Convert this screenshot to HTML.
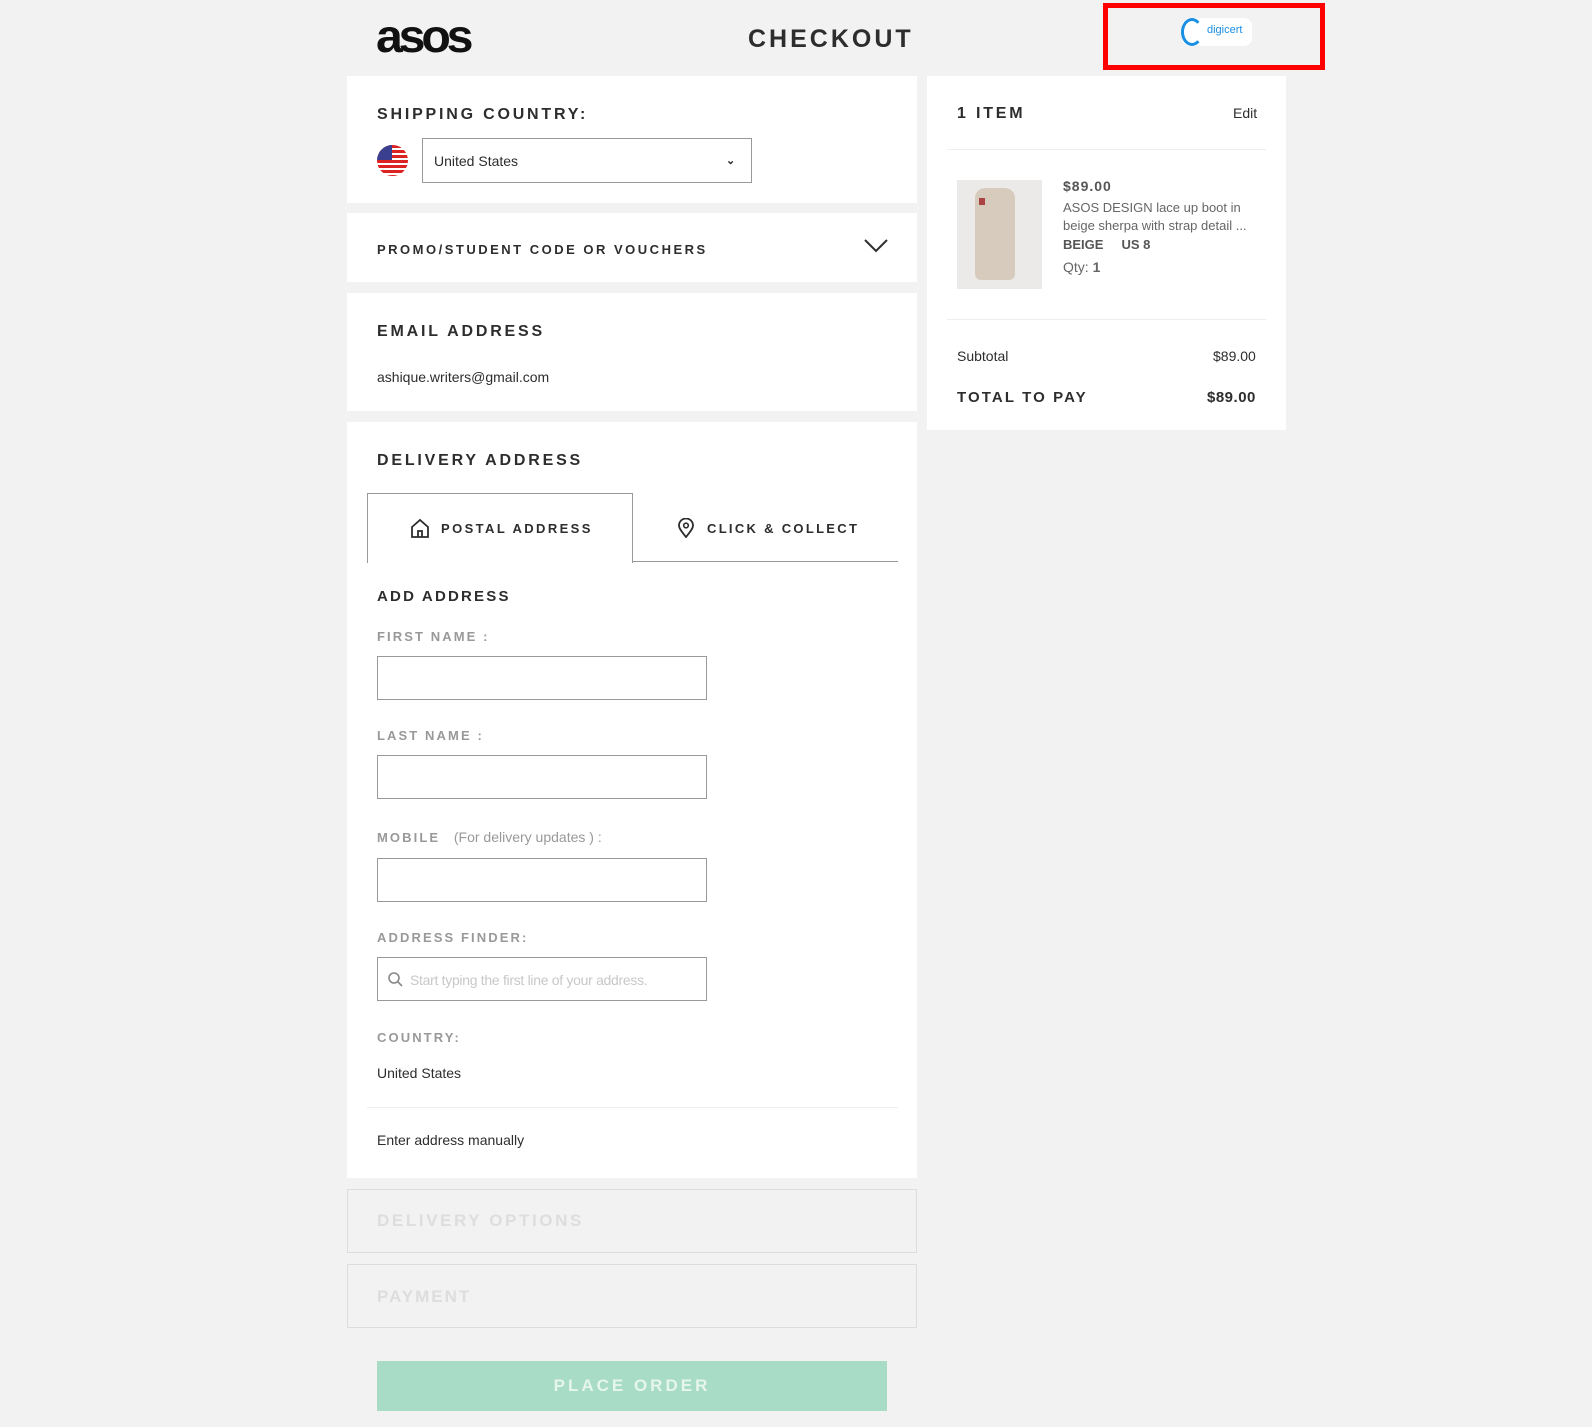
<!DOCTYPE html>
<html><head><meta charset="utf-8"><style>
*{margin:0;padding:0;box-sizing:border-box}
body{width:1592px;height:1427px;background:#f2f2f2;font-family:"Liberation Sans",sans-serif;color:#2d2d2d;position:relative;overflow:hidden}
.a{position:absolute}
.card{position:absolute;background:#fff}
.h{position:absolute;font-weight:bold;font-size:16px;letter-spacing:2.8px;line-height:20px;color:#2d2d2d;white-space:nowrap}
.t{position:absolute;font-size:14px;line-height:18px;white-space:nowrap;color:#2d2d2d}
.lab{position:absolute;font-weight:bold;font-size:13px;letter-spacing:2.1px;color:#999;line-height:16px;white-space:nowrap}
.inp{position:absolute;left:377px;width:330px;height:44px;border:1px solid #999;background:#fff}
</style></head><body>
<div class="a" style="left:376px;top:12px;font-weight:bold;font-size:46px;letter-spacing:-4px;line-height:48px;color:#111;transform:scaleX(1.05);transform-origin:left">asos</div>
<div class="a" style="left:748px;top:24px;font-weight:bold;font-size:25px;letter-spacing:3px;line-height:30px;color:#2d2d2d">CHECKOUT</div>
<div class="a" style="left:1103px;top:3px;width:222px;height:67px;border:5px solid #f00"></div>
<div class="a" style="left:1182px;top:18px;width:70px;height:28px;background:#fff;border-radius:8px"></div>
<div class="a" style="left:1181px;top:18px;width:22px;height:28px;border:3px solid #1a8fe3;border-right-color:transparent;border-radius:50%"></div>
<div class="a" style="left:1207px;top:24px;font-size:11px;color:#1a8fe3">digicert</div>

<div class="card" style="left:347px;top:76px;width:570px;height:127px"></div>
<div class="h" style="left:377px;top:105px">SHIPPING COUNTRY:</div>
<div class="a" style="left:377px;top:145px;width:31px;height:31px;border-radius:50%;overflow:hidden;background:repeating-linear-gradient(#d22 0 3px,#fff 3px 5px)"><div style="width:15px;height:15px;background:#3a3f8f"></div></div>
<div class="a" style="left:422px;top:138px;width:330px;height:45px;border:1px solid #999"></div>
<div class="t" style="left:434px;top:152px">United States</div>
<div class="t" style="left:726px;top:152px;font-size:11px;font-weight:bold">&#8964;</div>

<div class="card" style="left:347px;top:213px;width:570px;height:69px"></div>
<div class="h" style="left:377px;top:240px;font-size:13px;letter-spacing:2.5px">PROMO/STUDENT CODE OR VOUCHERS</div>
<svg class="a" style="left:864px;top:239px" width="24" height="14"><path d="M1 1L12 12L23 1" stroke="#2d2d2d" stroke-width="2" fill="none"/></svg>

<div class="card" style="left:347px;top:293px;width:570px;height:118px"></div>
<div class="h" style="left:377px;top:322px">EMAIL ADDRESS</div>
<div class="t" style="left:377px;top:368px">ashique.writers@gmail.com</div>

<div class="card" style="left:347px;top:422px;width:570px;height:756px"></div>
<div class="h" style="left:377px;top:451px">DELIVERY ADDRESS</div>
<div class="a" style="left:367px;top:493px;width:266px;height:70px;border:1px solid #999;border-bottom:none"></div>
<div class="a" style="left:633px;top:561px;width:265px;height:1px;background:#999"></div>
<svg class="a" style="left:410px;top:518px" width="20" height="20"><path d="M2 9L10 2L18 9V19H2Z M8 19V13H12V19" stroke="#2d2d2d" stroke-width="1.8" fill="none"/></svg>
<div class="h" style="left:441px;top:519px;font-size:13px;letter-spacing:2.4px">POSTAL ADDRESS</div>
<svg class="a" style="left:677px;top:518px" width="18" height="20"><path d="M9 19C4 13 2 10 2 7.5A7 7 0 0 1 16 7.5C16 10 14 13 9 19Z" stroke="#2d2d2d" stroke-width="1.8" fill="none"/><circle cx="9" cy="7.5" r="2.3" stroke="#2d2d2d" stroke-width="1.6" fill="none"/></svg>
<div class="h" style="left:707px;top:519px;font-size:13px;letter-spacing:2.3px">CLICK &amp; COLLECT</div>
<div class="h" style="left:377px;top:587px;font-size:15px;letter-spacing:2.2px">ADD ADDRESS</div>
<div class="lab" style="left:377px;top:629px">FIRST NAME :</div>
<div class="inp" style="top:656px"></div>
<div class="lab" style="left:377px;top:728px">LAST NAME :</div>
<div class="inp" style="top:755px"></div>
<div class="lab" style="left:377px;top:829px">MOBILE <span style="font-weight:normal;letter-spacing:0;font-size:14px;margin-left:8px">(For delivery updates ) :</span></div>
<div class="inp" style="top:858px"></div>
<div class="lab" style="left:377px;top:930px">ADDRESS FINDER:</div>
<div class="inp" style="top:957px"></div>
<svg class="a" style="left:388px;top:972px" width="15" height="15"><circle cx="6" cy="6" r="5" stroke="#888" stroke-width="1.6" fill="none"/><path d="M10 10L14 14" stroke="#888" stroke-width="1.6"/></svg>
<div class="t" style="left:410px;top:971px;color:#c8c8c8;letter-spacing:-0.3px">Start typing the first line of your address.</div>
<div class="lab" style="left:377px;top:1030px">COUNTRY:</div>
<div class="t" style="left:377px;top:1064px">United States</div>
<div class="a" style="left:367px;top:1107px;width:531px;height:1px;background:#eee"></div>
<div class="t" style="left:377px;top:1131px">Enter address manually</div>

<div class="a" style="left:347px;top:1189px;width:570px;height:64px;border:1px solid #ddd"></div>
<div class="h" style="left:377px;top:1211px;color:#ddd;font-size:17px;letter-spacing:2.6px">DELIVERY OPTIONS</div>
<div class="a" style="left:347px;top:1264px;width:570px;height:64px;border:1px solid #ddd"></div>
<div class="h" style="left:377px;top:1287px;color:#ddd;font-size:17px;letter-spacing:2px">PAYMENT</div>
<div class="a" style="left:377px;top:1361px;width:510px;height:50px;background:#a8dcc6;color:#e6f5ee;font-weight:bold;font-size:17px;letter-spacing:3px;text-align:center;line-height:50px">PLACE ORDER</div>

<div class="card" style="left:927px;top:76px;width:359px;height:354px"></div>
<div class="h" style="left:957px;top:104px">1 ITEM</div>
<div class="t" style="left:1233px;top:104px">Edit</div>
<div class="a" style="left:947px;top:149px;width:319px;height:1px;background:#eee"></div>
<div class="a" style="left:957px;top:180px;width:85px;height:109px;background:#eceae8"><div style="position:absolute;left:18px;top:8px;width:40px;height:92px;background:#d6cbbd;border-radius:10px 10px 6px 6px"></div><div style="position:absolute;left:22px;top:18px;width:6px;height:7px;background:#a44"></div></div>
<div class="t" style="left:1063px;top:177px;font-weight:bold;letter-spacing:1px;color:#555">$89.00</div>
<div class="t" style="left:1063px;top:199px;font-size:13px;color:#666">ASOS DESIGN lace up boot in</div>
<div class="t" style="left:1063px;top:217px;font-size:13px;color:#666">beige sherpa with strap detail ...</div>
<div class="t" style="left:1063px;top:236px;font-weight:bold;font-size:13px;color:#555">BEIGE&nbsp;&nbsp;&nbsp;&nbsp;&nbsp;US 8</div>
<div class="t" style="left:1063px;top:258px;color:#666">Qty: <b>1</b></div>
<div class="a" style="left:947px;top:319px;width:319px;height:1px;background:#eee"></div>
<div class="t" style="left:957px;top:347px">Subtotal</div>
<div class="t" style="left:1213px;top:347px">$89.00</div>
<div class="h" style="left:957px;top:388px;font-size:15px;letter-spacing:2.1px">TOTAL TO PAY</div>
<div class="h" style="left:1207px;top:388px;font-size:15px;letter-spacing:0.5px">$89.00</div>
</body></html>
